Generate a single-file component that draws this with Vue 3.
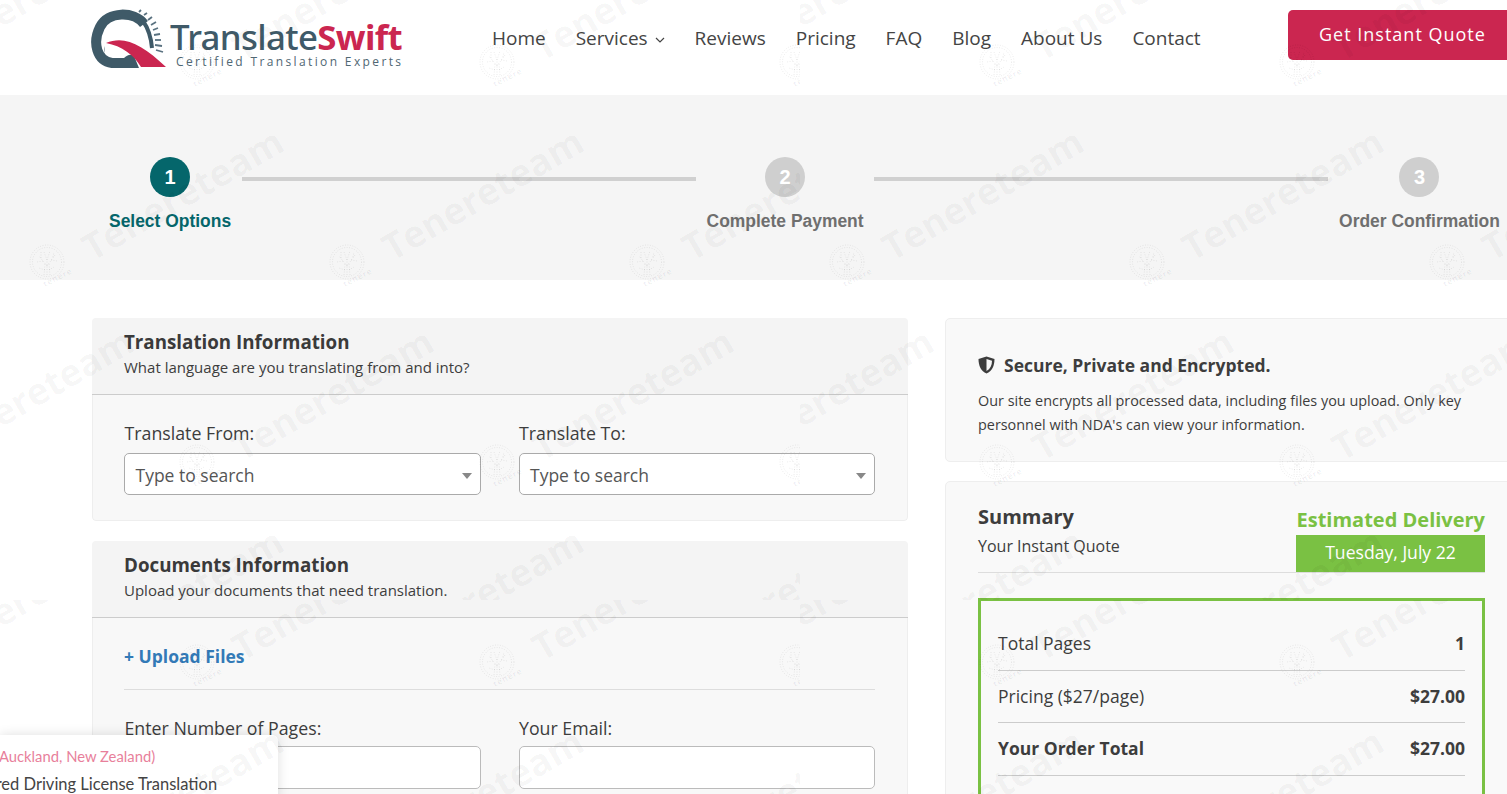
<script setup>
const navItems = [
  { label: 'Home' },
  { label: 'Services', caret: true },
  { label: 'Reviews' },
  { label: 'Pricing' },
  { label: 'FAQ' },
  { label: 'Blog' },
  { label: 'About Us' },
  { label: 'Contact' }
]
const tiles = [
  { x: 0, y: 0 },
  { x: 800, y: 0 },
  { x: 0, y: 600 },
  { x: 800, y: 600 }
]
const rowB = [-103, 197, 497, 797]
const rowA = [47, 347, 647]
const marks = [
  ...rowB.map((x) => ({ x, y: 62 })),
  ...rowA.map((x) => ({ x, y: 262 })),
  ...rowB.map((x) => ({ x, y: 462 })),
  ...rowA.map((x) => ({ x, y: 662 }))
]
</script>

<template>
  <div class="page">
    <header class="header">
      <div class="logo">
        <svg class="logo-mark" width="76" height="62" viewBox="90 8 76 62">
          <path d="M144 24 C134 11 108 11 100 27 C92 43 97 61 112 63 L133 63" fill="none" stroke="#3f5a68" stroke-width="10" />
          <path d="M105 46 C103 52 105 57 110 60 L104 60 Z" fill="#3f5a68" />
          <path d="M123 59 C128 54 131 54 134 56 L139 68 L123 68 Z" fill="#3f5a68" />
          <path d="M143 21 C148 28 151 37 152 48" fill="none" stroke="#3f5a68" stroke-width="4" />
          <g stroke="#5a7280" stroke-width="1.8" fill="none">
            <path d="M139 12 L141 10" />
            <path d="M144 15 L147 13" />
            <path d="M148 20 L152 17" />
            <path d="M151 25 L156 22" />
            <path d="M153 30 L158 28" />
            <path d="M154 35 L160 34" />
            <path d="M155 40 L161 40" />
            <path d="M155 45 L162 46" />
            <path d="M156 50 L163 52" />
          </g>
          <path d="M106 43 C124 35 142 44 166 67 L141 67 C134 55 122 46 106 43 Z" fill="#cb2650" />
        </svg>
        <div class="logo-text">
          <div class="logo-name">Translate<b>Swift</b></div>
          <div class="logo-tag">Certified Translation Experts</div>
        </div>
      </div>
      <nav class="nav">
        <a v-for="item in navItems" :key="item.label" class="nav-link">
          {{ item.label }}
          <svg v-if="item.caret" width="10" height="6" viewBox="0 0 10 6" class="caret">
            <path d="M1 1 L5 5 L9 1" fill="none" stroke="#444" stroke-width="1.2" />
          </svg>
        </a>
      </nav>
      <button class="quote-btn">Get Instant Quote</button>
    </header>

    <section class="stepper">
      <div class="step active">
        <span class="dot">1</span>
        <span class="step-label">Select Options</span>
      </div>
      <div class="step-line"></div>
      <div class="step">
        <span class="dot">2</span>
        <span class="step-label">Complete Payment</span>
      </div>
      <div class="step-line"></div>
      <div class="step">
        <span class="dot">3</span>
        <span class="step-label">Order Confirmation</span>
      </div>
    </section>

    <main class="main">
      <div class="col-left">
        <section class="panel">
          <div class="panel-head">
            <h2>Translation Information</h2>
            <p>What language are you translating from and into?</p>
          </div>
          <div class="panel-body first-body">
            <div class="fields">
              <div class="field">
                <label>Translate From:</label>
                <div class="select">Type to search<i class="arrow"></i></div>
              </div>
              <div class="field">
                <label>Translate To:</label>
                <div class="select">Type to search<i class="arrow"></i></div>
              </div>
            </div>
          </div>
        </section>

        <section class="panel">
          <div class="panel-head">
            <h2>Documents Information</h2>
            <p>Upload your documents that need translation.</p>
          </div>
          <div class="panel-body second-body">
            <a class="upload">+ Upload Files</a>
            <div class="fields">
              <div class="field">
                <label>Enter Number of Pages:</label>
                <div class="input"></div>
              </div>
              <div class="field">
                <label>Your Email:</label>
                <div class="input"></div>
              </div>
            </div>
          </div>
        </section>
      </div>

      <div class="col-right">
        <section class="card secure">
          <h3>
            <svg width="17" height="18" viewBox="0 0 17 18">
              <path d="M8.5 0.5 L16.5 3 C16.5 10 14 15 8.5 17.5 C3 15 0.5 10 0.5 3 Z" fill="#3d3d3d" />
              <path d="M8.5 3 L14 4.8 C14 9.5 12.3 13 8.5 15 Z" fill="#f8f8f8" />
            </svg>
            Secure, Private and Encrypted.
          </h3>
          <p>Our site encrypts all processed data, including files you upload. Only key personnel with NDA's can view your information.</p>
        </section>

        <section class="card summary">
          <div class="summary-head">
            <div>
              <h3>Summary</h3>
              <p>Your Instant Quote</p>
            </div>
            <div class="delivery">
              <strong>Estimated Delivery</strong>
              <span>Tuesday, July 22</span>
            </div>
          </div>
          <div class="totals">
            <div class="row"><span>Total Pages</span><b>1</b></div>
            <div class="row"><span>Pricing ($27/page)</span><b>$27.00</b></div>
            <div class="row"><b>Your Order Total</b><b>$27.00</b></div>
          </div>
        </section>
      </div>
    </main>

    <aside class="popup">
      <div class="popup-place">(Auckland, New Zealand)</div>
      <div class="popup-item">Ordered Driving License Translation</div>
    </aside>

    <svg class="watermark" width="1507" height="794" viewBox="0 0 1507 794">
      <svg v-for="t in tiles" :key="t.x + '-' + t.y" :x="t.x" :y="t.y" width="800" height="600" viewBox="0 0 800 600">
        <g v-for="m in marks" :key="m.x + '-' + m.y">
          <text :transform="`translate(${m.x + 45} ${m.y}) rotate(-30)`" class="wm-text">Tenereteam</text>
          <g :transform="`translate(${m.x} ${m.y})`" class="wm-seal">
            <circle r="17" />
            <circle r="14.5" />
            <path d="M0 13 L0 -2 M-3 13 L-2 2 M3 13 L2 2 M0 4 L-8 -6 M0 4 L8 -7 M-4 -1 L-10 0 M4 -2 L10 -1 M-2 8 L-8 6 M2 8 L7 5 M0 -2 L-3 -10 M0 -2 L3 -11 M-6 -4 L-6 -10 M6 -5 L7 -10" />
          </g>
          <text :transform="`translate(${m.x - 2} ${m.y + 25}) rotate(-27)`" class="wm-small">tenere</text>
        </g>
      </svg>
    </svg>
  </div>
</template>

<style>
html, body { margin: 0; overflow: hidden; background: #fff; }
</style>

<style scoped>
.page {
  position: relative;
  width: 100%;
  height: 794px;
  overflow: hidden;
  background: #fff;
  color: #3d3d3d;
  font-family: "Open Sans", "Noto Sans", sans-serif;
}
.header {
  display: flex;
  align-items: flex-start;
  height: 95px;
  padding-left: 92px;
  box-sizing: border-box;
}
.logo {
  display: flex;
  width: 400px;
  padding-top: 8px;
  flex: none;
}
.logo-mark { flex: none; margin-left: -2px; margin-right: 2px; }
.logo-text { margin-left: 2px; padding-top: 10px; }
.logo-name {
  font-family: "Noto Sans", sans-serif;
  font-size: 34.8px;
  font-weight: 500;
  line-height: 38px;
  letter-spacing: -0.65px;
  color: #3f5a68;
  white-space: nowrap;
}
.logo-name b { color: #cb2650; font-weight: 700; }
.logo-tag {
  margin-left: 6px;
  margin-top: -1px;
  font-size: 12px;
  line-height: 14px;
  letter-spacing: 2.37px;
  color: #4f6773;
  white-space: nowrap;
}
.nav {
  display: flex;
  gap: 30px;
  padding-top: 24px;
  flex: none;
}
.nav-link {
  font-size: 19px;
  line-height: 28px;
  color: #444;
  white-space: nowrap;
}
.caret { margin-left: 2px; vertical-align: 2px; }
.quote-btn {
  position: absolute;
  left: 1288px;
  top: 10px;
  width: 240px;
  height: 50px;
  padding: 0 0 2px 31px;
  border: 0;
  border-radius: 5px;
  background: #cb2650;
  color: #fff;
  font-family: inherit;
  font-size: 18px;
  letter-spacing: 1px;
  text-align: left;
}
.stepper {
  display: flex;
  align-items: flex-start;
  gap: 10.75px;
  height: 185px;
  padding: 62px 0 0 109px;
  box-sizing: border-box;
  background: #f5f5f5;
  font-family: "Liberation Sans", Arial, sans-serif;
  white-space: nowrap;
}
.step {
  display: flex;
  flex-direction: column;
  align-items: center;
  gap: 13px;
  flex: none;
}
.dot {
  display: flex;
  align-items: center;
  justify-content: center;
  width: 40px;
  height: 40px;
  border-radius: 50%;
  background: #cfcfcf;
  color: #fff;
  font-size: 20px;
  font-weight: 700;
}
.step-label {
  font-size: 17.45px;
  line-height: 22px;
  font-weight: 700;
  color: #6f6f6f;
}
.active .dot { background: #05666b; }
.active .step-label { color: #05666b; }
.step-line {
  flex: none;
  width: 454px;
  height: 4px;
  margin-top: 20px;
  background: #d0d0d0;
}
.main {
  display: flex;
  gap: 37px;
  padding: 38px 0 0 92px;
  align-items: flex-start;
}
.col-left {
  display: flex;
  flex-direction: column;
  gap: 20px;
  width: 816px;
  flex: none;
}
.panel {
  border-radius: 4px;
  overflow: hidden;
}
.panel-head {
  height: 77px;
  box-sizing: border-box;
  padding: 11px 31px 0 32px;
  background: #f4f4f4;
  border-bottom: 1px solid #ccc;
}
.panel-head h2 {
  margin: 0;
  font-size: 18.75px;
  line-height: 25px;
  font-weight: 700;
  color: #3a3a3a;
}
.panel-head p {
  margin: 1px 0 0;
  font-size: 15px;
  line-height: 25px;
}
.panel-body {
  padding: 26px 32px 0 31px;
  background: #f8f8f8;
  border: 1px solid #eee;
  border-top: 0;
  border-radius: 0 0 4px 4px;
}
.first-body { height: 126px; box-sizing: border-box; }
.second-body { padding-top: 24px; padding-bottom: 40px; }
.fields { display: flex; gap: 38px; }
.field { width: 356.5px; flex: none; }
.field label {
  display: block;
  margin-left: 0.5px;
  font-size: 17.75px;
  line-height: 24px;
}
.select, .input {
  position: relative;
  box-sizing: border-box;
  background: #fff;
  border: 1px solid #aaa;
  border-radius: 5px;
  margin-top: 8px;
}
.select {
  height: 42px;
  line-height: 42px;
  padding-left: 10.5px;
  font-size: 17.5px;
  color: #555;
}
.input { height: 43px; border-color: #bbb; margin-top: 6px; }
.arrow {
  position: absolute;
  right: 8px;
  top: 19px;
  border-left: 5px solid transparent;
  border-right: 5px solid transparent;
  border-top: 6px solid #888;
}
.upload {
  display: block;
  padding-bottom: 19px;
  margin-bottom: 26px;
  border-bottom: 1px solid #ddd;
  font-size: 17.5px;
  line-height: 28px;
  font-weight: 700;
  color: #337ab7;
  white-space: nowrap;
}
.col-right {
  display: flex;
  flex-direction: column;
  gap: 19px;
  width: 574px;
  flex: none;
}
.card {
  box-sizing: border-box;
  background: #f9f9f9;
  border: 1px solid #eee;
  border-radius: 5px;
  padding-left: 32px;
  padding-right: 33px;
}
.secure { height: 144px; padding-top: 31px; }
.secure h3 {
  display: flex;
  align-items: center;
  gap: 9px;
  margin: 0;
  font-size: 17.5px;
  line-height: 30px;
  font-weight: 700;
}
.secure p {
  margin: 9px 0 0;
  font-size: 14.4px;
  line-height: 24px;
}
.summary { height: 400px; padding-top: 20px; }
.summary-head {
  display: flex;
  justify-content: space-between;
  box-sizing: border-box;
  height: 71px;
  border-bottom: 1px solid #ddd;
}
.summary-head h3 {
  margin: 0;
  font-size: 20px;
  line-height: 30px;
  font-weight: 700;
}
.summary-head p {
  margin: 0;
  font-size: 16px;
  line-height: 28px;
}
.delivery {
  display: flex;
  flex-direction: column;
  align-items: flex-end;
  width: 189px;
  padding-top: 3px;
}
.delivery strong {
  font-size: 20px;
  line-height: 30px;
  font-weight: 700;
  color: #7ac143;
  white-space: nowrap;
}
.delivery span {
  width: 100%;
  height: 37px;
  background: #7ac143;
  color: #fff;
  font-size: 17.6px;
  line-height: 35px;
  text-align: center;
}
.totals {
  margin-top: 25px;
  padding: 17px 17px 0;
  border: 3px solid #7ac143;
  height: 260px;
  box-sizing: border-box;
}
.row {
  display: flex;
  justify-content: space-between;
  align-items: center;
  height: 50.5px;
  padding-bottom: 1px;
  border-bottom: 1px solid #ccc;
  font-size: 17.5px;
}
.row b { font-weight: 700; }
.popup {
  position: absolute;
  left: 0;
  top: 735px;
  z-index: 5;
  width: 278px;
  height: 70px;
  padding-top: 8px;
  box-sizing: border-box;
  overflow: hidden;
  background: #fff;
  border-radius: 0 6px 0 0;
  box-shadow: 0 0 12px rgba(0, 0, 0, 0.13);
  font-family: Lato, sans-serif;
  white-space: nowrap;
}
.popup-place { margin-left: -5px; color: #e8809b; font-size: 14.8px; line-height: 26px; }
.popup-item { margin-left: -41px; margin-top: 2px; color: #444; font-size: 16.5px; line-height: 26px; }
.watermark {
  position: absolute;
  left: 0;
  top: 0;
  z-index: 10;
  pointer-events: none;
}
.wm-text {
  font-family: "Open Sans", sans-serif;
  font-size: 37px;
  font-weight: 700;
  fill: rgba(0, 0, 0, 0.04);
}
.wm-seal {
  fill: none;
  stroke: rgba(0, 0, 0, 0.08);
  stroke-width: 1;
  stroke-dasharray: 1 1.5;
}
.wm-small {
  font-family: "Open Sans", sans-serif;
  font-size: 8px;
  font-weight: 600;
  letter-spacing: 1px;
  fill: rgba(0, 0, 0, 0.08);
}
</style>
